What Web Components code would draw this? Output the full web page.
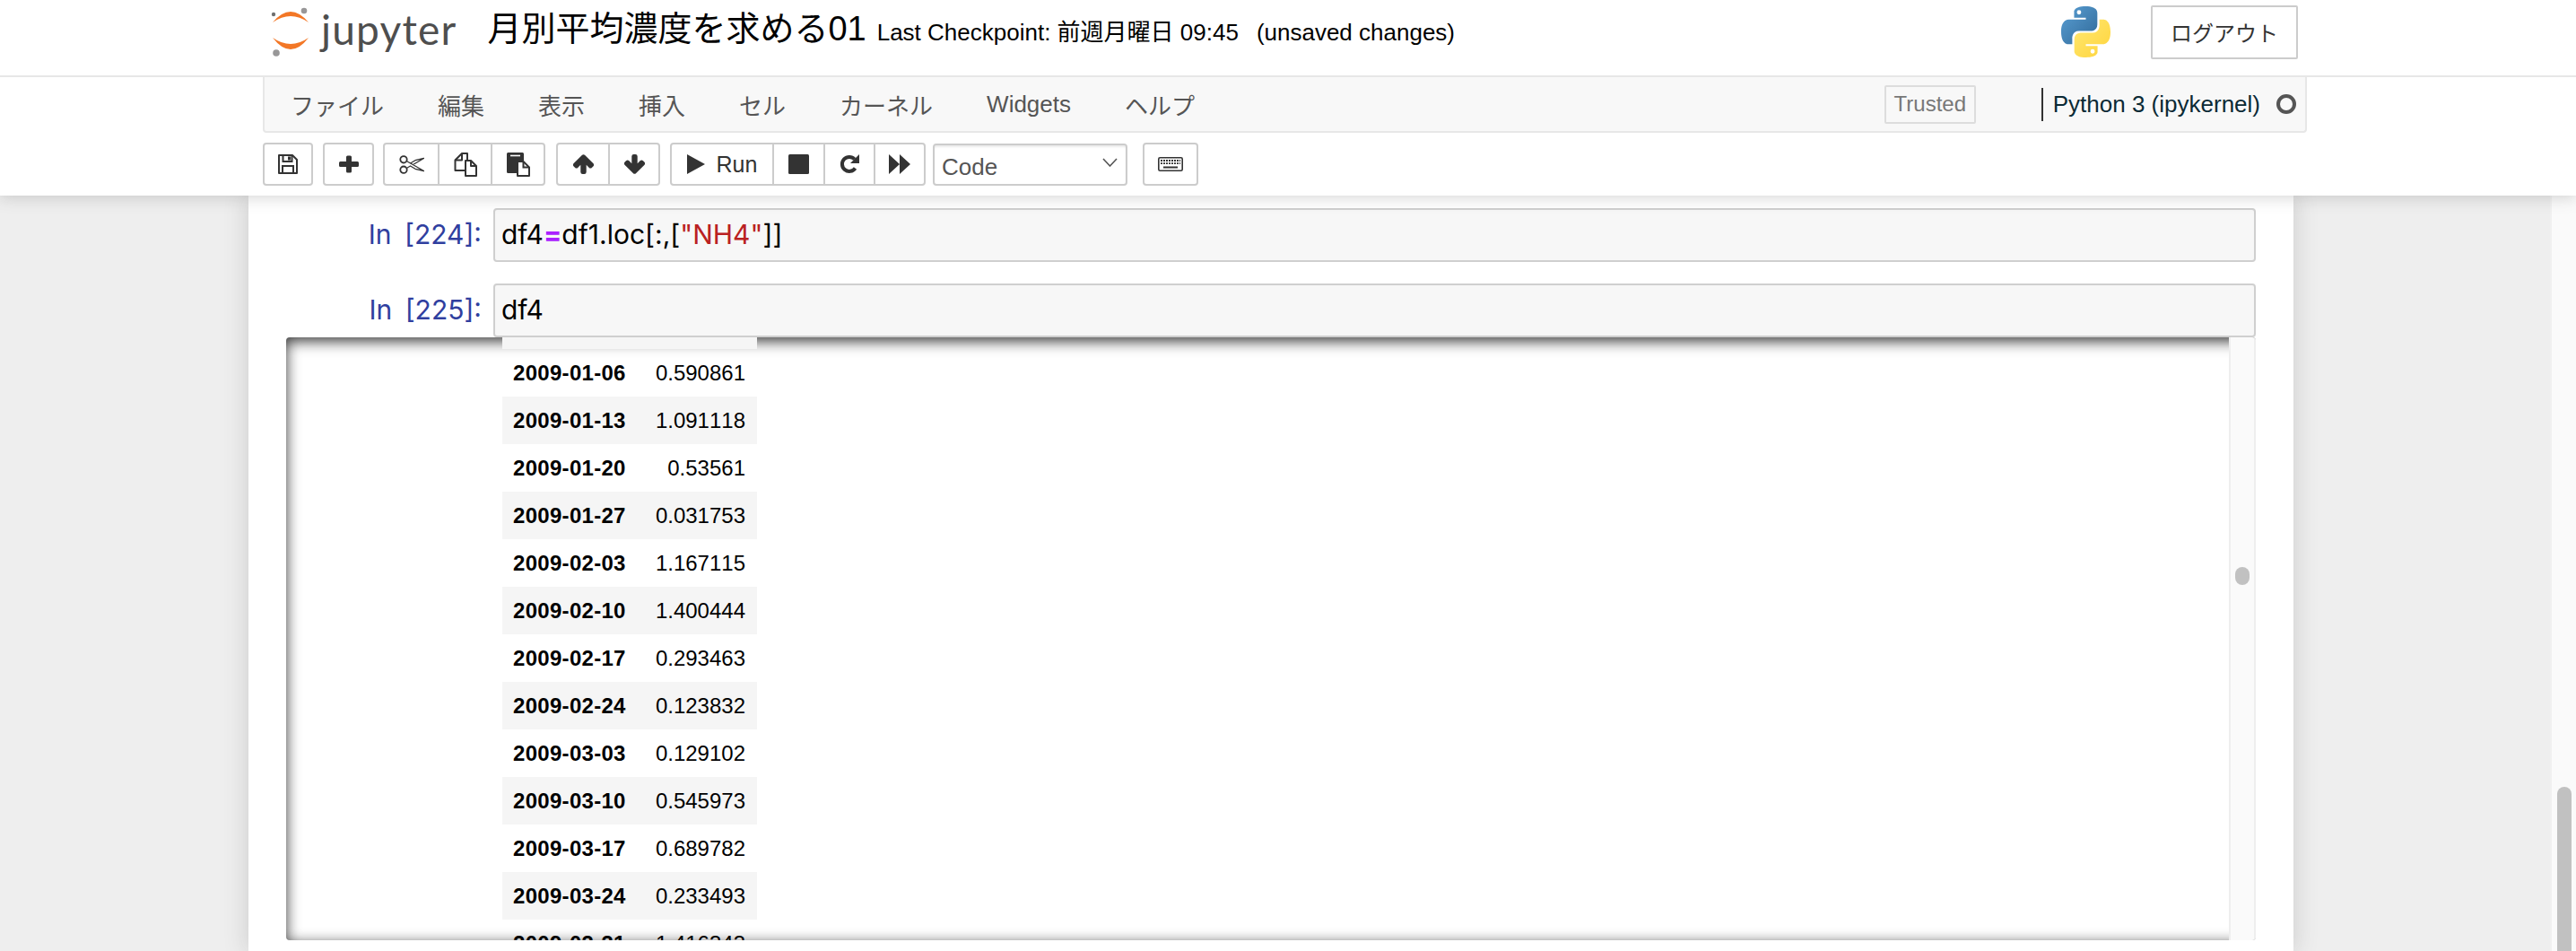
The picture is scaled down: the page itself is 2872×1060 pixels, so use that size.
<!DOCTYPE html>
<html lang="ja">
<head>
<meta charset="utf-8">
<title>月別平均濃度を求める01</title>
<style>
  html, body { margin: 0; padding: 0; height: 100%; overflow: hidden; }
  body { font-family: "Liberation Sans", "Noto Sans CJK JP", sans-serif; color: #000; }
</style>
</head>
<body>
<jp-app>
  <jp-header slot="top">
    <jp-logo></jp-logo>
    <jp-savewidget name="月別平均濃度を求める01" checkpoint="Last Checkpoint: 前週月曜日 09:45" status="(unsaved changes)"></jp-savewidget>
    <jp-python slot="right"></jp-python>
    <jp-logout slot="right">ログアウト</jp-logout>
  </jp-header>
  <jp-menubar slot="top">
    <jp-menu-item>ファイル</jp-menu-item>
    <jp-menu-item>編集</jp-menu-item>
    <jp-menu-item>表示</jp-menu-item>
    <jp-menu-item>挿入</jp-menu-item>
    <jp-menu-item>セル</jp-menu-item>
    <jp-menu-item>カーネル</jp-menu-item>
    <jp-menu-item>Widgets</jp-menu-item>
    <jp-menu-item>ヘルプ</jp-menu-item>
    <jp-kernel slot="right" name="Python 3 (ipykernel)"></jp-kernel>
  </jp-menubar>
  <jp-toolbar slot="top">
    <jp-btn-group>
      <jp-btn style="width:52px"><svg width="22" height="22" viewBox="0 0 22 22" fill="none" stroke="#333" stroke-width="2"><path d="M1 1H16L21 6V21H1Z" stroke-linejoin="round"/><path d="M5.5 1V8H15.5V1M5 21V13H17V21"/><rect x="11" y="2.5" width="3" height="4" fill="#333" stroke="none"/></svg></jp-btn>
    </jp-btn-group>
    <jp-btn-group>
      <jp-btn style="width:53px"><svg width="22" height="20" viewBox="0 0 22 20" fill="#333"><path d="M8 2a1.5 1.5 0 0 1 1.5-1.5h3A1.5 1.5 0 0 1 14 2V7h6.5A1.5 1.5 0 0 1 22 8.5v3a1.5 1.5 0 0 1-1.500 1.500H14v5a1.500 1.500 0 0 1-1.500 1.500h-3A1.500 1.500 0 0 1 8 18V13H1.500A1.500 1.500 0 0 1 0 11.500v-3A1.500 1.500 0 0 1 1.500 7H8Z"/></svg></jp-btn>
    </jp-btn-group>
    <jp-btn-group style="margin-left:-1px">
      <jp-btn style="width:59px"><svg width="28" height="21" viewBox="0 0 28 21" fill="none" stroke="#333" stroke-width="1.300"><circle cx="5" cy="4.800" r="3.700" stroke-width="1.800"/><circle cx="5" cy="16.200" r="3.700" stroke-width="1.800"/><path d="M8.300 6.500 27.500 17.500 18 15.300 12.500 12 8.300 14.500M12.500 9 18 5.700 27.500 3.500 15.500 10.500" stroke-linejoin="round"/></svg></jp-btn>
      <jp-btn style="width:59px"><svg width="26" height="27" viewBox="0 0 26 27" fill="none" stroke="#333" stroke-width="2" stroke-linejoin="round"><path d="M12 20H1.500V8.500L9 1H15V9"/><path d="M1.500 8.500H9V1"/><path d="M13 9H19L25 15V26H13Z" fill="#fff"/><path d="M19 9V15H25"/></svg></jp-btn>
      <jp-btn style="width:59px"><svg width="26" height="27" viewBox="0 0 26 27"><path d="M1.500 0H17.500A1.500 1.500 0 0 1 19 1.500V9H12V23H1.500A1.500 1.500 0 0 1 0 21.500V1.500A1.500 1.500 0 0 1 1.500 0Z" fill="#333"/><path d="M4 3.500H15" stroke="#fff" stroke-width="1.600"/><path d="M12 10H18.500L25 16.500V26H12Z" fill="#fff" stroke="#333" stroke-width="2" stroke-linejoin="round"/><path d="M18.500 10V16.500H25" fill="none" stroke="#333" stroke-width="2"/></svg></jp-btn>
    </jp-btn-group>
    <jp-btn-group style="margin-left:1px">
      <jp-btn style="width:56px"><svg width="23" height="22" viewBox="0 0 23 22" fill="#333"><path d="M9.800 1A2.400 2.400 0 0 1 13.200 1L22.300 10.100A2.400 2.400 0 0 1 22.300 13.500L21 14.700A2.400 2.400 0 0 1 17.600 14.700L14.700 11.700V19.500A2.400 2.400 0 0 1 12.300 22H10.700A2.400 2.400 0 0 1 8.300 19.500V11.700L5.400 14.700A2.400 2.400 0 0 1 2 14.700L.7 13.500A2.400 2.400 0 0 1 .7 10.100Z"/></svg></jp-btn>
      <jp-btn style="width:56px"><svg width="23" height="22" viewBox="0 0 23 22" fill="#333"><g transform="rotate(180 11.500 11)"><path d="M9.800 1A2.400 2.400 0 0 1 13.200 1L22.300 10.100A2.400 2.400 0 0 1 22.300 13.500L21 14.700A2.400 2.400 0 0 1 17.600 14.700L14.700 11.700V19.500A2.400 2.400 0 0 1 12.300 22H10.700A2.400 2.400 0 0 1 8.300 19.500V11.700L5.400 14.700A2.400 2.400 0 0 1 2 14.700L.7 13.500A2.400 2.400 0 0 1 .7 10.100Z"/></g></svg></jp-btn>
    </jp-btn-group>
    <jp-btn-group>
      <jp-btn style="width:112px"><svg width="20" height="22" viewBox="0 0 20 22" fill="#333"><path d="M0 0 20 11 0 22Z"/></svg><span style="margin-left:13px;font-size:25px">Run</span></jp-btn>
      <jp-btn style="width:57px"><svg width="23" height="22" viewBox="0 0 23 22" fill="#333"><rect width="23" height="22" rx="1.500"/></svg></jp-btn>
      <jp-btn style="width:56px"><svg width="22" height="22" viewBox="0 0 22 22" fill="none"><path d="M17.500 15.500A8 8 0 1 1 16.800 5.500" stroke="#333" stroke-width="4"/><path d="M22 0V10H12Z" fill="#333"/></svg></jp-btn>
      <jp-btn style="width:56px"><svg width="24" height="22" viewBox="0 0 24 22" fill="#333"><path d="M0 0 12 11 0 22ZM12 0 24 11 12 22Z"/></svg></jp-btn>
    </jp-btn-group>
    <jp-cell-select value="Code"></jp-cell-select>
    <jp-btn-group style="margin-left:-1px">
      <jp-btn style="width:58px"><svg width="28" height="16" viewBox="0 0 28 16"><rect x=".8" y=".8" width="26.400" height="14.400" rx="1.500" fill="none" stroke="#333" stroke-width="1.600"/><path d="M3 4H25M3 7.200H25" stroke="#333" stroke-width="1.800" stroke-dasharray="2 1"/><path d="M6 11.500H22" stroke="#333" stroke-width="2"/></svg></jp-btn>
    </jp-btn-group>
  </jp-toolbar>

  <jp-notebook>
    <jp-cell prompt="In [224]:"><span>df4</span><span style="color:#aa22ff;font-weight:700">=</span><span>df1.loc[:,[</span><span style="color:#ba2121">"NH4"</span><span>]]</span></jp-cell>
    <jp-cell prompt="In [225]:"><span>df4</span></jp-cell>
    <jp-output-scroll>
      <jp-df-table></jp-df-table>
    </jp-output-scroll>
  </jp-notebook>
  <jp-page-scrollbar slot="bar"></jp-page-scrollbar>
</jp-app>

<script>
const FONT = '"Liberation Sans", "Noto Sans CJK JP", sans-serif';
const CODE_FONT = 'Inter, "Liberation Sans", sans-serif';

// small helper, every element gets a template and an open shadow root
const make = (name, html, setup) => {
  const template = document.createElement('template');
  template.innerHTML = html;
  customElements.define(name, class extends HTMLElement {
    constructor() {
      super();
      this.attachShadow({ mode: 'open' });
    }
    connectedCallback() {
      if (this.shadowRoot.firstChild) return;
      this.shadowRoot.appendChild(template.content.cloneNode(true));
      if (setup) setup(this, this.shadowRoot);
    }
  });
};

make('jp-app', `
  <style>
    :host { display: grid; grid-template-columns: 1fr 29px; grid-template-rows: 218px 1fr; height: 1060px; background: #eee; overflow: hidden; }
    .top { grid-column: 1 / 3; background: #fff; position: relative; z-index: 2; box-shadow: 0 2px 16px rgba(87, 87, 87, .25); display: flex; flex-direction: column; }
  </style>
  <div class="top"><slot name="top"></slot></div>
  <slot></slot>
  <slot name="bar"></slot>
`);

make('jp-header', `
  <style>
    :host { display: flex; align-items: flex-start; height: 84px; border-bottom: 2px solid #e7e7e7; padding: 0 310px 0 301px; font-family: ${FONT}; }
    .right { margin-left: auto; display: flex; align-items: flex-start; gap: 45px; }
  </style>
  <slot></slot>
  <div class="right"><slot name="right"></slot></div>
`);

make('jp-logo', `
  <style>
    :host { display: flex; align-items: flex-start; flex: none; }
    svg { display: block; margin-top: 8px; }
    span { font: 400 46px Lato, sans-serif; color: #4e4e4e; letter-spacing: 1.2px; margin-left: 11px; line-height: 56px; margin-top: 5px; }
  </style>
  <svg width="46" height="56" viewBox="0 0 46 56">
    <path d="M3 17Q23 -7 43 17Q23 3 3 17Z" fill="#f37726"/>
    <path d="M3 34Q23 60 43 34Q23 48 3 34Z" fill="#f37726"/>
    <circle cx="38" cy="4" r="3.300" fill="#989798"/>
    <circle cx="4" cy="8" r="2.200" fill="#6f7070"/>
    <circle cx="7" cy="51" r="3.800" fill="#989798"/>
  </svg>
  <span>jupyter</span>
`);

make('jp-savewidget', `
  <style>
    :host { display: flex; align-items: baseline; margin-left: 34px; padding-top: 1px; flex: none; }
    .name { font-size: 38px; color: #000; }
    .cp { font-size: 26px; margin-left: 12px; }
    .st { font-size: 26px; margin-left: 20px; }
  </style>
  <span class="name"></span><span class="cp"></span><span class="st"></span>
`, (el, root) => {
  root.querySelector('.name').textContent = el.getAttribute('name');
  root.querySelector('.cp').textContent = el.getAttribute('checkpoint');
  root.querySelector('.st').textContent = el.getAttribute('status');
});

make('jp-python', `
  <style>
    :host { display: block; margin-top: 7px; flex: none; }
    svg { display: block; }
  </style>
  <svg width="55" height="57" viewBox="0 0 24 24" preserveAspectRatio="none">
    <defs>
      <linearGradient id="pb" x1="0" y1="0" x2="1" y2="1"><stop offset="0" stop-color="#5a9fd4"/><stop offset="1" stop-color="#306998"/></linearGradient>
      <linearGradient id="py" x1="0" y1="0" x2="1" y2="1"><stop offset="0" stop-color="#ffd43b"/><stop offset="1" stop-color="#ffe873"/></linearGradient>
    </defs>
    <path fill="url(#pb)" fill-rule="evenodd" d="M11.900 0C6 0 6.300 2.600 6.300 2.600V5.400H12V6.200H3.900S0 5.800 0 11.900 3.400 17.800 3.400 17.800H5.400V15S5.300 11.600 8.700 11.600H14.400S17.600 11.650 17.600 8.500V3.200S18.100 0 11.900 0ZM8.700 1.800A1.050 1.050 0 1 1 8.700 3.900 1.050 1.050 0 0 1 8.700 1.800Z"/>
    <path fill="url(#py)" fill-rule="evenodd" transform="rotate(180 12 12)" d="M11.900 0C6 0 6.300 2.600 6.300 2.600V5.400H12V6.200H3.900S0 5.800 0 11.900 3.400 17.800 3.400 17.800H5.400V15S5.300 11.600 8.700 11.600H14.400S17.600 11.650 17.600 8.500V3.200S18.100 0 11.900 0ZM8.700 1.800A1.050 1.050 0 1 1 8.700 3.900 1.050 1.050 0 0 1 8.700 1.800Z"/>
  </svg>
`);

make('jp-logout', `
  <style>
    :host { display: flex; align-items: center; justify-content: center; box-sizing: border-box; margin-top: 6px; padding-bottom: 2px; width: 164px; height: 60px; border: 2px solid #ccc; border-radius: 2px; font-size: 24px; color: #333; flex: none; }
  </style>
  <slot></slot>
`);

make('jp-menubar', `
  <style>
    :host { display: flex; align-items: center; box-sizing: border-box; margin-left: 293px; width: 2279px; height: 62px; background: #f8f8f8; border: 2px solid #e7e7e7; border-top: none; border-radius: 0 0 4px 4px; font-family: ${FONT}; }
    .right { margin-left: auto; display: flex; align-items: center; }
    ::slotted(jp-menu-item:first-child) { margin-left: -1px; }
  </style>
  <slot></slot>
  <div class="right"><slot name="right"></slot></div>
`);

make('jp-menu-item', `
  <style>
    :host { display: block; padding: 0 30px; font-size: 26px; color: #555; }
  </style>
  <slot></slot>
`);

make('jp-kernel', `
  <style>
    :host { display: flex; align-items: center; }
    .trusted { box-sizing: border-box; width: 102px; height: 43px; border: 2px solid #ddd; border-radius: 2px; font-size: 24px; color: #777; display: flex; align-items: center; justify-content: center; margin-right: 73px; }
    .name { border-left: 2px solid #333; height: 37px; line-height: 37px; padding-left: 11px; font-size: 26px; color: #0b2a35; white-space: nowrap; }
    .dot { box-sizing: border-box; width: 22px; height: 22px; border: 4px solid #555; border-radius: 50%; margin: 0 10px 0 18px; }
  </style>
  <span class="trusted">Trusted</span><span class="name"></span><span class="dot"></span>
`, (el, root) => {
  root.querySelector('.name').textContent = el.getAttribute('name');
});

make('jp-toolbar', `
  <style>
    :host { display: flex; gap: 11px; padding: 11px 0 0 293px; align-items: flex-start; font-family: ${FONT}; }
  </style>
  <slot></slot>
`);

make('jp-btn-group', `
  <style>
    :host { display: flex; box-sizing: border-box; height: 48px; border: 2px solid #ccc; border-radius: 4px; background: #fff; flex: none; }
    ::slotted(jp-btn:not(:first-child)) { border-left: 2px solid #ccc; }
  </style>
  <slot></slot>
`);

make('jp-btn', `
  <style>
    :host { display: flex; align-items: center; justify-content: center; box-sizing: border-box; height: 44px; font-size: 26px; color: #333; flex: none; }
    ::slotted(svg) { display: block; flex: none; }
  </style>
  <slot></slot>
`);

make('jp-cell-select', `
  <style>
    :host { display: flex; align-items: center; box-sizing: border-box; width: 217px; height: 47px; margin: 1px 7px 0 -3px; padding: 6px 9px 0 8px; border: 2px solid #ccc; border-radius: 4px; box-shadow: inset 0 2px 2px rgba(0, 0, 0, .075); font-size: 26px; color: #555; background: #fff; flex: none; }
    svg { margin-left: auto; margin-top: -11px; display: block; }
  </style>
  <span></span>
  <svg width="17" height="10" viewBox="0 0 17 10" fill="none" stroke="#555" stroke-width="1.600"><path d="M1 1 8.500 9 16 1"/></svg>
`, (el, root) => {
  root.querySelector('span').textContent = el.getAttribute('value');
});

make('jp-notebook', `
  <style>
    :host { display: flex; flex-direction: column; gap: 24px; box-sizing: border-box; margin: 0 286px 0 277px; padding: 14px 42px 0; background: #fff; box-shadow: 0 0 24px 2px rgba(87, 87, 87, .2); overflow: hidden; height: 842px; }
  </style>
  <slot></slot>
`);

make('jp-cell', `
  <style>
    :host { display: flex; align-items: center; flex: none; font-family: ${CODE_FONT}; font-size: 30px; }
    .prompt { box-sizing: border-box; width: 231px; padding-right: 13px; padding-bottom: 2px; text-align: right; color: #303f9f; word-spacing: 6px; white-space: nowrap; }
    .input { flex: 1; box-sizing: border-box; height: 60px; padding: 0 7px 2px; display: flex; align-items: center; background: #f7f7f7; border: 2px solid #cfcfcf; border-radius: 4px; color: #000; white-space: pre; }
  </style>
  <div class="prompt"></div>
  <div class="input"><slot></slot></div>
`, (el, root) => {
  root.querySelector('.prompt').textContent = el.getAttribute('prompt');
});

make('jp-output-scroll', `
  <style>
    :host { display: flex; flex: none; height: 672px; margin-top: -24px; border-radius: 4px; overflow: hidden; box-shadow: inset 0 4px 16px rgba(0, 0, 0, .8); }
    .content { flex: 1; padding-left: 241px; overflow: hidden; }
    .bar { width: 30px; box-sizing: border-box; background: #fafafa; border-left: 2px solid #eee; border-right: 2px solid #eee; display: flex; align-items: flex-start; justify-content: center; }
    .thumb { width: 16px; height: 20px; margin-top: 256px; border-radius: 8px; background: #c1c1c1; }
  </style>
  <div class="content"><slot></slot></div>
  <div class="bar"><div class="thumb"></div></div>
`);

const ROWS = [
  ['2009-01-06', '0.590861'], ['2009-01-13', '1.091118'], ['2009-01-20', '0.53561'],
  ['2009-01-27', '0.031753'], ['2009-02-03', '1.167115'], ['2009-02-10', '1.400444'],
  ['2009-02-17', '0.293463'], ['2009-02-24', '0.123832'], ['2009-03-03', '0.129102'],
  ['2009-03-10', '0.545973'], ['2009-03-17', '0.689782'], ['2009-03-24', '0.233493'],
  ['2009-03-31', '1.416343'],
];

make('jp-df-table', `
  <style>
    :host { display: block; width: 284px; font-family: "Liberation Sans", sans-serif; font-size: 24px; font-kerning: none; color: #000; }
    .strip { height: 13px; background: #f5f5f5; }
    table { border-collapse: collapse; width: 100%; table-layout: fixed; }
    tr { height: 53px; }
    tr:nth-child(even) { background: #f5f5f5; }
    th, td { padding: 0 13px 0 12px; white-space: nowrap; }
    th { text-align: left; font-weight: 700; letter-spacing: .3px; width: 138px; box-sizing: border-box; padding-right: 0; }
    td { text-align: right; }
  </style>
  <div class="strip"></div>
  <table><tbody></tbody></table>
`, (el, root) => {
  const body = root.querySelector('tbody');
  ROWS.forEach(([date, value]) => {
    const tr = document.createElement('tr');
    const th = document.createElement('th');
    const td = document.createElement('td');
    th.textContent = date;
    td.textContent = value;
    tr.append(th, td);
    body.appendChild(tr);
  });
});

make('jp-page-scrollbar', `
  <style>
    :host { display: flex; align-items: flex-end; justify-content: center; background: #fafafa; border-left: 2px solid #f0f0f0; box-sizing: border-box; }
    .thumb { width: 16px; height: 183px; margin-left: 0; border-radius: 8px 8px 0 0; background: #c1c1c1; }
  </style>
  <div class="thumb"></div>
`);
</script>
</body>
</html>
